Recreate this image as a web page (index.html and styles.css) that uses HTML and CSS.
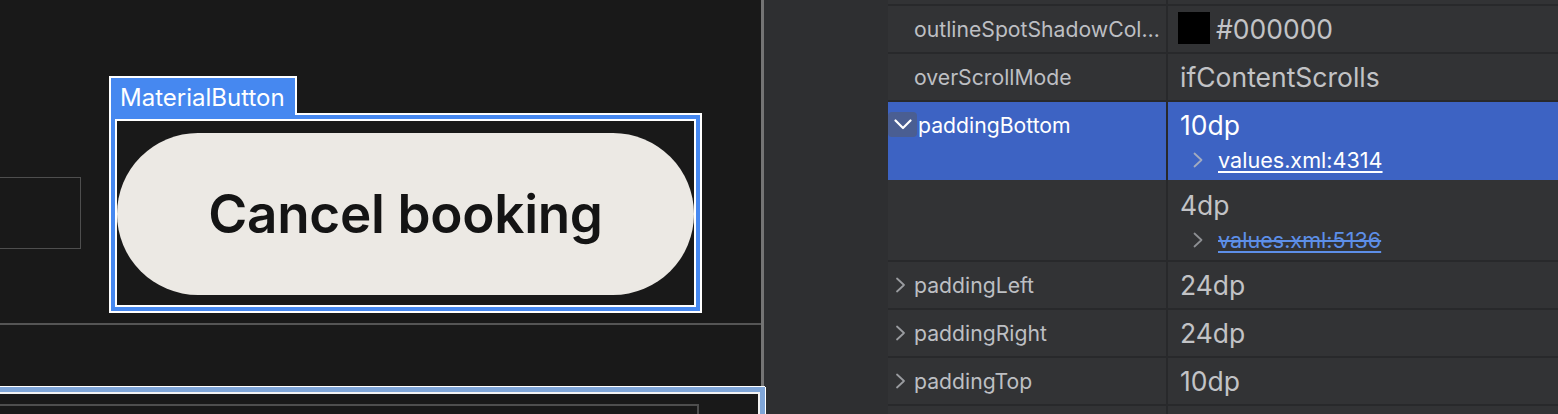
FILE: index.html
```html
<!DOCTYPE html>
<html lang="en">
<head>
<meta charset="utf-8">
<title>Layout Inspector</title>
<link rel="stylesheet" href="styles.css">
</head>
<body>
<div class="app">
  <div class="canvas">
    <div class="view-box"></div>
    <div class="hline"></div>
    <div class="sel-rect">
      <div class="pill"><span class="pill-text">Cancel booking</span></div>
    </div>
    <div class="sel-label">MaterialButton</div>
    <div class="hover-rect"></div>
    <div class="inner-box"></div>
  </div>
  <div class="panel">
    <div class="side"></div>
    <div class="table">
      <div class="cell"></div>
      <div class="cell"></div>

      <div class="cell name"><span class="exp"></span><span class="label">outlineSpotShadowCol…</span></div>
      <div class="cell value"><span class="swatch"></span><span>#000000</span></div>

      <div class="cell name"><span class="exp"></span><span class="label">overScrollMode</span></div>
      <div class="cell value">ifContentScrolls</div>

      <div class="cell stack">
        <div class="sub sel name-sel">
          <span class="toggle">
            <svg width="18" height="11" viewBox="0 0 18 11"><polyline points="1.5,1.5 9,9 16.5,1.5" fill="none" stroke="#ffffff" stroke-width="2.2" stroke-linecap="round" stroke-linejoin="round"/></svg>
          </span>
          <span class="label">paddingBottom</span>
        </div>
        <div class="sub rest"></div>
      </div>
      <div class="cell stack">
        <div class="sub sel vsub">
          <div class="vline">10dp</div>
          <div class="lline">
            <svg class="chev-s" width="10" height="16" viewBox="0 0 10 16"><polyline points="1.5,1.5 8.5,8 1.5,14.5" fill="none" stroke="#a3abbf" stroke-width="1.8" stroke-linecap="round" stroke-linejoin="round"/></svg>
            <span class="link">values.xml:4314</span>
          </div>
        </div>
        <div class="sub rest vsub vsub-rest">
          <div class="vline">4dp</div>
          <div class="lline">
            <svg class="chev-s" width="10" height="16" viewBox="0 0 10 16"><polyline points="1.5,1.5 8.5,8 1.5,14.5" fill="none" stroke="#8d8f93" stroke-width="1.8" stroke-linecap="round" stroke-linejoin="round"/></svg>
            <span class="link link-old">values.xml:5136</span>
          </div>
        </div>
      </div>

      <div class="cell name"><span class="exp"><svg width="11" height="16" viewBox="0 0 11 16"><polyline points="2,1.5 9,8 2,14.5" fill="none" stroke="#9a9ca0" stroke-width="1.8" stroke-linecap="round" stroke-linejoin="round"/></svg></span><span class="label">paddingLeft</span></div>
      <div class="cell value">24dp</div>

      <div class="cell name"><span class="exp"><svg width="11" height="16" viewBox="0 0 11 16"><polyline points="2,1.5 9,8 2,14.5" fill="none" stroke="#9a9ca0" stroke-width="1.8" stroke-linecap="round" stroke-linejoin="round"/></svg></span><span class="label">paddingRight</span></div>
      <div class="cell value">24dp</div>

      <div class="cell name"><span class="exp"><svg width="11" height="16" viewBox="0 0 11 16"><polyline points="2,1.5 9,8 2,14.5" fill="none" stroke="#9a9ca0" stroke-width="1.8" stroke-linecap="round" stroke-linejoin="round"/></svg></span><span class="label">paddingTop</span></div>
      <div class="cell value">10dp</div>

      <div class="cell"></div>
      <div class="cell"></div>
    </div>
  </div>
</div>
</body>
</html>
```
FILE: styles.css
```css
html, body {
  margin: 0;
  padding: 0;
  width: 1558px;
  height: 414px;
  overflow: hidden;
  background: #2e2f31;
}

.app {
  display: flex;
  width: 1558px;
  height: 414px;
  overflow: hidden;
  font-family: Inter, "Noto Sans", sans-serif;
}

/* ---------- left canvas ---------- */
.canvas {
  position: relative;
  flex: none;
  width: 761px;
  height: 414px;
  background: #191919;
  border-right: 3px solid #747474;
}

.view-box {
  position: absolute;
  left: -2px;
  top: 177px;
  width: 83px;
  height: 72px;
  box-sizing: border-box;
  border: 1px solid #4e4e4e;
}

.hline {
  position: absolute;
  left: 0;
  top: 323px;
  width: 761px;
  height: 2px;
  background: #555555;
}

.sel-rect {
  position: absolute;
  left: 111px;
  top: 115px;
  width: 589px;
  height: 196px;
  box-sizing: border-box;
  border: 4px solid #4688f0;
  box-shadow: 0 0 0 2px #ffffff, inset 0 0 0 2px #ffffff;
  padding: 14px 2px 12px 2px;
  display: flex;
}

.pill {
  flex: 1;
  border-radius: 81px;
  background: #ece9e4;
  display: flex;
  align-items: center;
  justify-content: center;
  filter: blur(0.5px);
}

.pill-text {
  font-family: Inter, "Noto Sans", sans-serif;
  font-weight: 600;
  font-size: 53px;
  color: #141414;
  letter-spacing: -0.3px;
}

.sel-label {
  position: absolute;
  left: 109px;
  top: 76px;
  width: 188px;
  height: 39px;
  box-sizing: border-box;
  background: #4688f0;
  border: 2px solid #ffffff;
  border-bottom: none;
  color: #ffffff;
  font-size: 24px;
  line-height: 40px;
  padding-left: 9px;
  white-space: nowrap;
}

.hover-rect {
  position: absolute;
  left: -20px;
  top: 387px;
  width: 785px;
  height: 27px;
  box-sizing: border-box;
  border: 5px solid #7fa5d7;
  border-bottom: none;
  box-shadow: 0 -1px 0 0 #ffffff, 1px 0 0 0 #ffffff, inset 0 2px 0 0 #f2f2f2, inset -2px 0 0 0 #f2f2f2;
  z-index: 2;
}

.inner-box {
  position: absolute;
  left: -2px;
  top: 404px;
  width: 701px;
  height: 10px;
  box-sizing: border-box;
  border-top: 2px solid #4e4e4e;
  border-right: 2px solid #4e4e4e;
}

/* ---------- right panel ---------- */
.panel {
  flex: 1;
  display: flex;
  background: #2e2f31;
}

.side {
  flex: none;
  width: 124px;
}

.table {
  flex: none;
  width: 670px;
  height: 414px;
  display: grid;
  grid-template-columns: 278px 390px;
  grid-template-rows: 4px 46px 46px 158px 46px 46px 46px 8px;
  gap: 2px;
  background: #28292b;
  align-content: start;
}

.cell {
  background: #323335;
  min-width: 0;
  overflow: hidden;
}

.name {
  display: flex;
  align-items: center;
  color: #bdbfc3;
  font-size: 21.2px;
  line-height: 46px;
  white-space: nowrap;
}

.exp {
  flex: none;
  width: 26px;
  box-sizing: border-box;
  padding-left: 7px;
  display: flex;
  align-items: center;
}

.label {
  overflow: hidden;
  white-space: nowrap;
}

.value {
  display: flex;
  align-items: center;
  padding-left: 12px;
  color: #c2c3c6;
  font-size: 26.5px;
  line-height: 46px;
  white-space: nowrap;
}

.swatch {
  flex: none;
  width: 32px;
  height: 32px;
  background: #000000;
  margin-left: -2px;
  margin-right: 6px;
  margin-top: -2px;
}

.stack {
  display: flex;
  flex-direction: column;
}

.sub.sel {
  height: 78px;
  flex: none;
  background: #3d63c3;
  color: #ffffff;
}

.sub.rest {
  flex: 1;
}

.name-sel {
  display: flex;
  align-items: flex-start;
  font-size: 21.2px;
  line-height: 46px;
  white-space: nowrap;
}

.toggle {
  flex: none;
  width: 29px;
  height: 25px;
  margin-top: 10px;
  margin-right: 1px;
  border-radius: 4px;
  background: #4a5e92;
  display: flex;
  align-items: center;
  justify-content: center;
}

.vsub {
  box-sizing: border-box;
  padding-left: 12px;
}

.vsub-rest {
  padding-top: 2px;
  color: #c2c3c6;
}

.vline {
  font-size: 26.5px;
  line-height: 46px;
}

.lline {
  display: flex;
  align-items: center;
  padding-left: 13px;
  font-size: 21.6px;
  line-height: 24px;
  white-space: nowrap;
}

.chev-s {
  flex: none;
  margin-right: 15px;
}

.link {
  color: #ffffff;
  text-decoration: underline;
  text-underline-offset: 3px;
  text-decoration-thickness: 1.5px;
}

.link-old {
  color: #5d8fe8;
  text-decoration: underline line-through;
}
```
